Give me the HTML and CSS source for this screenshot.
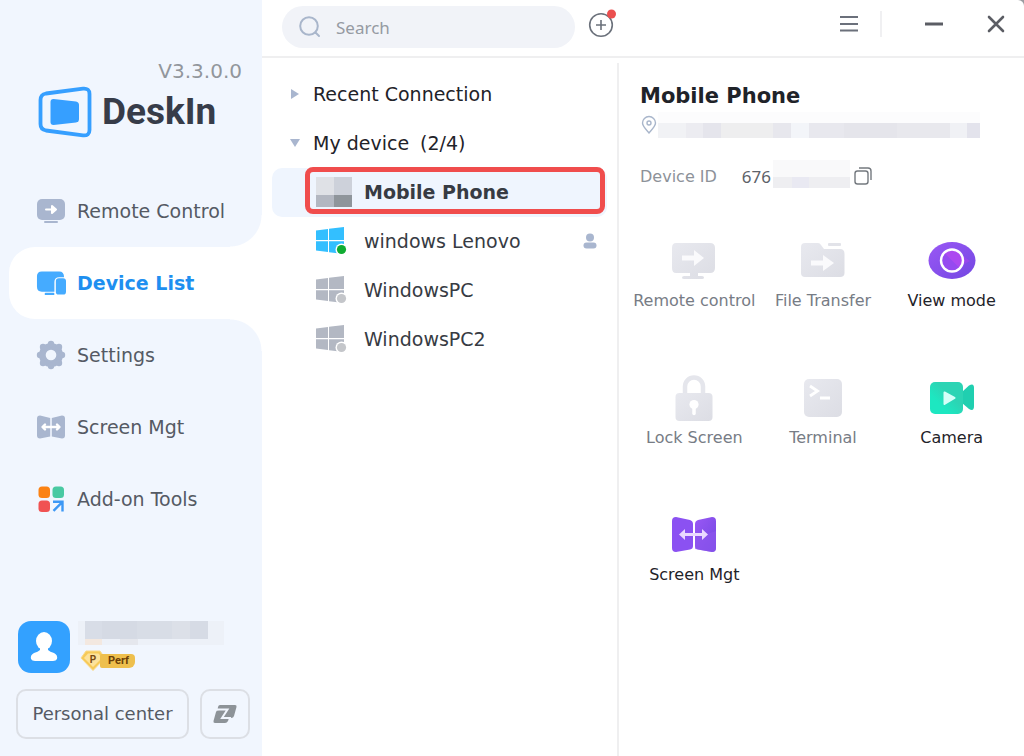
FILE: index.html
```html
<!DOCTYPE html>
<html lang="en">
<head>
    <meta charset="UTF-8">
    <meta name="viewport" content="width=device-width, initial-scale=1.0">
    <title>DeskIn</title>
    <link rel="stylesheet" href="styles.css">
</head>
<body>
    <div id="app">

        <!-- Sidebar -->
        <aside class="sidebar">
            <div class="brand">
                <span class="version">V3.3.0.0</span>
                <div class="logo">
                    <svg width="54" height="52" viewBox="0 0 54 52">
                        <path d="M8 7.500L45 2.600Q51.500 2 51.500 8V44Q51.500 50 45 49.400L8 44.500Q2.500 43.500 2.500 38V14Q2.500 8.500 8 7.500Z" fill="none" stroke="#369fff" stroke-width="3.800"/>
                        <path d="M15.500 13L38 15.500Q41 16 41 19V33Q41 36 38 36.500L15.500 39Q12.500 39 12.500 36V16Q12.500 13 15.500 13Z" fill="#369fff"/>
                    </svg>
                    <span>DeskIn</span>
                </div>
            </div>

            <nav class="menu">
                <a href="#">
                    <svg width="30" height="28" viewBox="0 0 30 28">
                        <rect x="1" y="2" width="28" height="21" rx="5" fill="#a9b6cf"/>
                        <rect x="8" y="24" width="14" height="2" rx="1" fill="#a9b6cf"/>
                        <path d="M10 12.500H18M16 9L20 12.500L16 16Z" fill="#fff" stroke="#fff" stroke-width="2" stroke-linejoin="round" stroke-linecap="round"/>
                    </svg>
                    Remote Control
                </a>
                <a href="#" class="active">
                    <svg width="31" height="28" viewBox="0 0 31 28">
                        <path d="M6 2H24Q29 2 29 8H24Q19 8 19 13V23H6Q1 23 1 18V7Q1 2 6 2Z" fill="#45abff"/>
                        <rect x="20.500" y="9" width="10.500" height="17" rx="3" fill="#45abff"/>
                        <rect x="9" y="24" width="10" height="2.500" rx="1" fill="#45abff"/>
                    </svg>
                    Device List
                </a>
                <a href="#">
                    <svg width="30" height="30" viewBox="0 0 30 30">
                        <g fill="#a9b6cf">
                            <circle cx="15" cy="15" r="12"/>
                            <circle cx="15" cy="4" r="3.200"/>
                            <circle cx="15" cy="26" r="3.200"/>
                            <circle cx="4" cy="15" r="3.200"/>
                            <circle cx="26" cy="15" r="3.200"/>
                            <circle cx="7" cy="7" r="3.200"/>
                            <circle cx="23" cy="7" r="3.200"/>
                            <circle cx="7" cy="23" r="3.200"/>
                            <circle cx="23" cy="23" r="3.200"/>
                        </g>
                        <circle cx="15" cy="15" r="5.300" fill="#f1f6fe"/>
                    </svg>
                    Settings
                </a>
                <a href="#">
                    <svg width="30" height="26" viewBox="0 0 30 26">
                        <path d="M4 1.500L14.200 4V22.500L4 24.500Q1 24.500 1 21.500V4.500Q1 1.500 4 1.500ZM26 1.500L15.800 4V22.500L26 24.500Q29 24.500 29 21.500V4.500Q29 1.500 26 1.500Z" fill="#a9b6cf"/>
                        <path d="M7 13H23M9 10.500L6.500 13L9 15.500M21 10.500L23.500 13L21 15.500" fill="none" stroke="#fff" stroke-width="2.400" stroke-linecap="round" stroke-linejoin="round"/>
                    </svg>
                    Screen Mgt
                </a>
                <a href="#">
                    <svg width="30" height="28" viewBox="0 0 30 28">
                        <rect x="2.500" y="1.500" width="11.500" height="11.500" rx="3.500" fill="#fb8214"/>
                        <rect x="16.500" y="1.500" width="11.500" height="11.500" rx="3.500" fill="#49c9a2"/>
                        <rect x="2.500" y="15.500" width="11.500" height="11.500" rx="3.500" fill="#f05252"/>
                        <path d="M17 16.800H26.500V26.500M26 17.300L17.500 25.800" fill="none" stroke="#3c98f5" stroke-width="2.400"/>
                    </svg>
                    Add-on Tools
                </a>
            </nav>

            <div class="account">
                <div class="user">
                    <div class="avatar">
                        <svg width="30" height="32" viewBox="0 0 30 32">
                            <ellipse cx="15" cy="10" rx="8" ry="9" fill="#fff"/>
                            <path d="M11 15H19V19Q21 21 25 22Q29 24 28 28Q27 30 24 30H6Q3 30 2 28Q1 24 5 22Q9 21 11 19Z" fill="#fff"/>
                        </svg>
                    </div>
                    <div class="user-info">
                        <svg width="146" height="24" viewBox="0 0 146 24">
                            <rect width="146" height="24" fill="#edf1f8"/>
                            <rect x="7" width="17" height="18" fill="#d8dde7"/>
                            <rect x="24" width="35" height="18" fill="#d5dae4"/>
                            <rect x="59" width="35" height="18" fill="#d8dde6"/>
                            <rect x="94" width="18" height="18" fill="#dce0e8"/>
                            <rect x="112" width="18" height="18" fill="#d6dbe5"/>
                            <rect x="7" y="18" width="17" height="6" fill="#f3e8e0"/>
                            <rect x="42" y="18" width="18" height="6" fill="#e5e7ed"/>
                        </svg>
                        <div class="plan">
                            <svg width="26" height="22" viewBox="0 0 26 22">
                                <path d="M6 1H20L25 8L13 20.500L1 8Z" fill="#f6ca59" stroke="#fbd98a" stroke-width="1"/>
                                <path d="M8 3.500H18.500L22 8L13 17L4 8Z" fill="#fde29b"/>
                                <text x="13" y="13" text-anchor="middle" class="plan-letter">P</text>
                            </svg>
                            <span>Perf</span>
                        </div>
                    </div>
                </div>
                <div class="account-buttons">
                    <button class="personal">Personal center</button>
                    <button class="switch" aria-label="Switch">
                        <svg width="26" height="20" viewBox="0 0 26 20">
                            <path d="M8 1H23Q25 1 24.500 3L22 12Q21.500 14 19 14H17L16 17Q15 19 13 19H3Q1 19 1.500 17L4 8Q4.500 6 7 6H5.500L6 3Q6.500 1 8 1Z" fill="#8d9398"/>
                            <path d="M5 5.500H15.500L10 14H19" fill="none" stroke="#f1f6fe" stroke-width="2"/>
                        </svg>
                    </button>
                </div>
            </div>
        </aside>

        <div class="main">
            <!-- Top bar -->
            <header class="topbar">
                <label class="search">
                    <svg width="22" height="22" viewBox="0 0 22 22" fill="none" stroke="#a9b6cb" stroke-width="2" stroke-linecap="round">
                        <circle cx="10" cy="10" r="8.800"/>
                        <path d="M16.500 16.500L20 20"/>
                    </svg>
                    <input type="text" placeholder="Search" aria-label="Search">
                </label>
                <button class="add" aria-label="Add device">
                    <svg width="30" height="34" viewBox="0 0 30 34">
                        <circle cx="14" cy="18" r="11.300" fill="none" stroke="#6b717b" stroke-width="1.600"/>
                        <path d="M14 13V23M9 18H19" stroke="#6b717b" stroke-width="1.600"/>
                        <circle cx="24.500" cy="7" r="4.500" fill="#eb4f4f"/>
                    </svg>
                </button>
                <div class="window-buttons">
                    <button aria-label="Menu">
                        <svg width="20" height="20" viewBox="0 0 20 20"><path d="M1 3H19M1 10H19M1 16.500H19" stroke="#6b707b" stroke-width="1.800"/></svg>
                    </button>
                    <span class="divider"></span>
                    <button aria-label="Minimize">
                        <svg width="20" height="20" viewBox="0 0 20 20"><path d="M1 10H19" stroke="#5b5d64" stroke-width="3"/></svg>
                    </button>
                    <button aria-label="Close">
                        <svg width="20" height="20" viewBox="0 0 20 20"><path d="M3 3L17 17M17 3L3 17" stroke="#5b5d64" stroke-width="2.600" stroke-linecap="round"/></svg>
                    </button>
                </div>
            </header>

            <div class="content">
                <!-- Device list -->
                <section class="devices">
                    <button class="group">
                        <svg width="12" height="12" viewBox="0 0 12 12"><path d="M2 1L10 6L2 11Z" fill="#a9b6cf"/></svg>
                        Recent Connection
                    </button>
                    <button class="group">
                        <svg width="12" height="12" viewBox="0 0 12 12"><path d="M1 2H11L6 10Z" fill="#a9b6cf"/></svg>
                        My device <span class="count">(2/4)</span>
                    </button>
                    <button class="device selected">
                        <svg width="36" height="30" viewBox="0 0 36 30">
                            <rect width="18" height="18" fill="#dfe1e6"/>
                            <rect x="18" width="18" height="18" fill="#cdd1da"/>
                            <rect y="18" width="18" height="12" fill="#b3b7c1"/>
                            <rect x="18" y="18" width="18" height="12" fill="#8f959b"/>
                        </svg>
                        Mobile Phone
                    </button>
                    <button class="device">
                        <svg width="36" height="30" viewBox="0 0 36 30">
                            <path d="M0 4.500L12 3V14H0ZM13 2.800L28 1V14H13ZM0 15.200H12V26L0 24.500ZM13 15.200H28V28L13 26.200Z" fill="#33bfff"/>
                            <circle cx="25.500" cy="23.500" r="6" fill="#fff"/>
                            <circle cx="25.500" cy="23.500" r="4.600" fill="#10ac32"/>
                        </svg>
                        windows Lenovo
                        <svg class="owner" width="14" height="16" viewBox="0 0 14 16" fill="#a9b6cf">
                            <circle cx="7" cy="4.500" r="4"/>
                            <rect x="0.500" y="9.500" width="13" height="6" rx="3"/>
                        </svg>
                    </button>
                    <button class="device">
                        <svg width="36" height="30" viewBox="0 0 36 30">
                            <path d="M0 4.500L12 3V14H0ZM13 2.800L28 1V14H13ZM0 15.200H12V26L0 24.500ZM13 15.200H28V28L13 26.200Z" fill="#b3b8c3"/>
                            <circle cx="25.500" cy="23.500" r="6" fill="#fff"/>
                            <circle cx="25.500" cy="23.500" r="4.600" fill="#c4c6ca"/>
                        </svg>
                        WindowsPC
                    </button>
                    <button class="device">
                        <svg width="36" height="30" viewBox="0 0 36 30">
                            <path d="M0 4.500L12 3V14H0ZM13 2.800L28 1V14H13ZM0 15.200H12V26L0 24.500ZM13 15.200H28V28L13 26.200Z" fill="#b3b8c3"/>
                            <circle cx="25.500" cy="23.500" r="6" fill="#fff"/>
                            <circle cx="25.500" cy="23.500" r="4.600" fill="#c4c6ca"/>
                        </svg>
                        WindowsPC2
                    </button>
                </section>

                <!-- Selected device -->
                <section class="detail">
                    <div class="info">
                        <h1>Mobile Phone</h1>
                        <div class="location">
                            <svg width="18" height="20" viewBox="0 0 18 20" fill="none" stroke="#a9b6cb" stroke-width="1.400">
                                <path d="M9 18C6 14.500 2.500 11 2.500 8A6.500 6.500 0 0 1 15.500 8C15.500 11 12 14.500 9 18Z"/>
                                <circle cx="9" cy="8" r="2"/>
                            </svg>
                            <svg width="322" height="26" viewBox="0 0 322 26">
                                <rect width="322" height="11" fill="#fcfcfd"/>
                                <rect y="11" width="322" height="15" fill="#ececf1"/>
                                <rect y="11" width="28" height="15" fill="#f1f2f5"/>
                                <rect x="45" y="11" width="18" height="15" fill="#e5e5ec"/>
                                <rect x="63" y="11" width="52" height="15" fill="#eeeeef"/>
                                <rect x="115" y="11" width="18" height="15" fill="#e7e7ed"/>
                                <rect x="133" y="11" width="18" height="15" fill="#f3f5f9"/>
                                <rect x="151" y="11" width="35" height="15" fill="#e8e8ee"/>
                                <rect x="186" y="11" width="53" height="15" fill="#e5e5eb"/>
                                <rect x="239" y="11" width="53" height="15" fill="#e8e8ed"/>
                                <rect x="292" y="11" width="17" height="15" fill="#f0f1f5"/>
                                <rect x="309" y="11" width="13" height="15" fill="#e3e3ec"/>
                            </svg>
                        </div>
                        <div class="device-id">
                            <span class="label">Device ID</span>
                            <span class="number">676</span>
                            <svg width="77" height="28" viewBox="0 0 77 28">
                                <rect width="77" height="17" fill="#f9f9fa"/>
                                <rect y="17" width="77" height="11" fill="#eeeef1"/>
                                <rect x="19" y="17" width="17" height="11" fill="#e9e9f2"/>
                            </svg>
                            <button aria-label="Copy device ID">
                                <svg width="20" height="20" viewBox="0 0 20 20" fill="none" stroke="#74797f" stroke-width="1.400">
                                    <rect x="2" y="5" width="13" height="13" rx="2.500"/>
                                    <path d="M6 2H15Q18 2 18 5V14"/>
                                </svg>
                            </button>
                        </div>
                    </div>

                    <svg width="0" height="0" class="defs">
                        <defs>
                            <linearGradient id="gray" x1="0" y1="0" x2="1" y2="1"><stop offset="0" stop-color="#e8e9ef"/><stop offset="1" stop-color="#dcdde4"/></linearGradient>
                            <linearGradient id="purple" x1="0" y1="0" x2="1" y2="1"><stop offset="0" stop-color="#9a58f5"/><stop offset="1" stop-color="#7347e2"/></linearGradient>
                            <linearGradient id="green" x1="0" y1="1" x2="1" y2="0"><stop offset="0.300" stop-color="#1de7c1"/><stop offset="0.600" stop-color="#2cd4b4"/></linearGradient>
                        </defs>
                    </svg>

                    <div class="actions">
                        <button disabled>
                            <svg width="48" height="48" viewBox="0 0 48 48">
                                <path d="M6 6H40Q45 6 45 11V31Q45 36 40 36H28V39H32Q34 39 34 40.500T32 42H14Q12 42 12 40.500T14 39H20V36H6Q2 36 2 31V11Q2 6 6 6Z" fill="url(#gray)"/>
                                <path d="M12 18.500H24V13L34 21L24 29V23.500H12Z" fill="#fafafc"/>
                            </svg>
                            Remote control
                        </button>
                        <button disabled>
                            <svg width="48" height="48" viewBox="0 0 48 48">
                                <path d="M6 6H19Q21 6 22 8L25 12H41Q45.500 12 45.500 17V36Q45.500 40 41 40H6Q2 40 2 36V10Q2 6 6 6Z" fill="url(#gray)"/>
                                <rect x="29" y="6" width="13" height="3" rx="1" fill="#e2e3e9"/>
                                <path d="M12 23.500H24V18L35 26L24 34V28.500H12Z" fill="#fafafc"/>
                            </svg>
                            File Transfer
                        </button>
                        <button>
                            <svg width="48" height="48" viewBox="0 0 48 48">
                                <ellipse cx="24" cy="23.500" rx="23.500" ry="18.500" fill="url(#purple)"/>
                                <path d="M31 16L42 24L31 30Z" fill="#a146ee" opacity=".7"/>
                                <circle cx="24" cy="23.500" r="11" fill="#ac4af0"/>
                                <path d="M16.200 15.700A11 11 0 0 0 31.800 31.300Z" fill="#964af0"/>
                                <circle cx="24" cy="23.500" r="11" fill="none" stroke="#fff" stroke-width="2.400"/>
                            </svg>
                            View mode
                        </button>
                        <button disabled>
                            <svg width="48" height="48" viewBox="0 0 48 48">
                                <path d="M15 21V12.500A9 9 0 0 1 33 12.500V21" fill="none" stroke="#e5e6ec" stroke-width="4.500"/>
                                <rect x="5.500" y="19" width="37" height="28" rx="4" fill="url(#gray)"/>
                                <circle cx="24" cy="30.500" r="4.600" fill="#fff"/>
                                <path d="M24 32V39.500" stroke="#fff" stroke-width="3.500" stroke-linecap="round"/>
                            </svg>
                            Lock Screen
                        </button>
                        <button disabled>
                            <svg width="48" height="48" viewBox="0 0 48 48">
                                <rect x="5" y="5" width="38" height="38" rx="5" fill="url(#gray)"/>
                                <path d="M11 12L18.500 17L11 22M21 24H31" fill="none" stroke="#fff" stroke-width="2.800"/>
                            </svg>
                            Terminal
                        </button>
                        <button>
                            <svg width="48" height="48" viewBox="0 0 48 48">
                                <path d="M34 18L41 11.500Q46 8.500 46 14V32Q46 38 41 35L34 29Z" fill="#20cfb0"/>
                                <rect x="2" y="8" width="33" height="32" rx="5" fill="url(#green)"/>
                                <path d="M16.500 18.500L26.500 24L16.500 30Z" fill="#d5fff8" stroke="#d5fff8" stroke-width="2" stroke-linejoin="round"/>
                            </svg>
                            Camera
                        </button>
                        <button>
                            <svg width="48" height="48" viewBox="0 0 48 48">
                                <path d="M6 6L20 9Q23 10 23 13V35Q23 38 20 38.500L6 41Q2 41 2 37V10Q2 6 6 6Z" fill="#8b51f2"/>
                                <path d="M42 6L28 9Q25 10 25 13V35Q25 38 28 38.500L42 41Q46 41 46 37V10Q46 6 42 6Z" fill="url(#purple)"/>
                                <path d="M25 27L46 20V37Q46 41 42 41L25 38Z" fill="#8f56ee" opacity=".6"/>
                                <path d="M9 23.500L15 18V22H32V18L38 23.500L32 29V25H15V29Z" fill="#ead9ff"/>
                            </svg>
                            Screen Mgt
                        </button>
                    </div>
                </section>
            </div>
        </div>
    </div>
</body>
</html>
```
FILE: styles.css
```css
* {
    box-sizing: border-box;
    margin: 0;
    padding: 0;
}

body {
    font-family: "DejaVu Sans", Verdana, sans-serif;
    font-size: 19px;
    line-height: 24px;
    color: #1f2329;
    background-color: #9a9ca1;
}

button {
    font: inherit;
    color: inherit;
    background: none;
    border: none;
    cursor: pointer;
}

a {
    color: inherit;
    text-decoration: none;
}

svg {
    display: block;
    flex-shrink: 0;
}

#app {
    display: flex;
    min-height: 100vh;
    background-color: #fff;
    border-top-right-radius: 6px;
}

/* Sidebar */
.sidebar {
    display: flex;
    flex-direction: column;
    width: 262px;
    flex-shrink: 0;
    background-color: #f1f6fe;
    color: #555a64;
}

.brand {
    display: flex;
    flex-direction: column;
    padding: 59px 20px 0 38px;
}

.version {
    align-self: flex-end;
    font-size: 20px;
    color: #92969c;
}

.logo {
    display: flex;
    align-items: center;
    gap: 10px;
    margin-top: 3px;
    font-family: Roboto, sans-serif;
    font-size: 37px;
    font-weight: bold;
    color: #373c49;
}

.menu {
    margin-top: 37px;
}

.menu a {
    position: relative;
    display: flex;
    align-items: center;
    gap: 11px;
    height: 72px;
    padding-left: 36px;
}

.menu svg {
    width: 30px;
}

.menu .active {
    margin-left: 9px;
    padding-left: 27px;
    border-radius: 26px 0 0 26px;
    background-color: #fff;
    color: #1e8ff0;
    font-weight: bold;
}

/* Curved corners above and below the active item */
.menu .active::before,
.menu .active::after {
    content: "";
    position: absolute;
    right: 0;
    width: 32px;
    height: 32px;
}

.menu .active::before {
    bottom: 100%;
    background: radial-gradient(circle at 0 0, #f1f6fe 31px, #fff 32px);
}

.menu .active::after {
    top: 100%;
    background: radial-gradient(circle at 0 100%, #f1f6fe 31px, #fff 32px);
}

.account {
    margin-top: auto;
    padding: 0 12px 17px 16px;
}

.user {
    display: flex;
    gap: 8px;
    padding-left: 2px;
}

.avatar {
    display: flex;
    align-items: center;
    justify-content: center;
    width: 52px;
    height: 52px;
    border-radius: 13px;
    background-color: #33a1ff;
}

.user-info {
    display: flex;
    flex-direction: column;
    gap: 5px;
}

.plan {
    display: flex;
    align-items: center;
    padding-left: 2px;
}

.plan span {
    margin-left: -6px;
    padding: 0 6px 0 8px;
    background-color: #eebf4d;
    border-radius: 2px 4px 6px 2px;
    font: bold 11px/14px Roboto, sans-serif;
    color: #6b3f08;
}

.plan-letter {
    font: bold 10px Roboto, sans-serif;
    fill: #7a4a10;
}

.account-buttons {
    display: flex;
    gap: 11px;
    margin-top: 16px;
}

.account-buttons button {
    display: flex;
    align-items: center;
    justify-content: center;
    height: 50px;
    border: 2px solid #dcdfe5;
    border-radius: 10px;
    font-size: 18px;
}

.personal {
    flex: 1;
}

.switch {
    width: 50px;
}

/* Top bar */
.main {
    display: flex;
    flex-direction: column;
    flex: 1;
}

.topbar {
    display: flex;
    align-items: center;
    height: 58px;
    padding: 0 18px 2px 20px;
    border-bottom: 2px solid #efeff0;
}

.search {
    display: flex;
    align-items: center;
    gap: 15px;
    width: 293px;
    height: 42px;
    padding: 0 17px;
    border-radius: 21px;
    background-color: #f1f3f8;
}

.search input {
    flex: 1;
    min-width: 0;
    border: none;
    outline: none;
    background: none;
    font: 17px "Noto Sans", sans-serif;
}

.search input::placeholder {
    color: #959aa2;
}

.add {
    margin: -6px 0 0 12px;
}

.window-buttons {
    display: flex;
    align-items: center;
    margin: -6px 0 0 auto;
}

.window-buttons button {
    margin-left: 42px;
}

.divider {
    width: 2px;
    height: 26px;
    margin-left: 21px;
    background-color: #f0f0f2;
}

.content {
    display: flex;
    flex: 1;
}

/* Device list */
.devices {
    width: 355px;
    padding: 12px 10px 0;
}

.group,
.device {
    position: relative;
    display: flex;
    align-items: center;
    width: 100%;
    height: 49px;
    text-align: left;
}

.group {
    gap: 12px;
    padding: 0 0 2px 17px;
}

.count {
    margin-left: -1px;
}

.device {
    gap: 12px;
    padding: 0 10px 1px 44px;
    color: #373b43;
}

.owner {
    margin-left: auto;
}

.selected {
    background-color: #eff5fe;
    border-radius: 10px;
    font-weight: bold;
}

/* Red frame around the selected device */
.selected::after {
    content: "";
    position: absolute;
    inset: -1px 2px 3px 33px;
    border: 5px solid #f04d4d;
    border-radius: 8px;
}

/* Device detail */
.detail {
    flex: 1;
    margin-top: 5px;
    border-left: 2px solid #efeff0;
}

.info {
    padding: 21px 20px 0 21px;
}

.detail h1 {
    font-size: 21px;
    line-height: 24px;
}

.location {
    display: flex;
    align-items: center;
    height: 26px;
    margin-top: 4px;
}

.device-id {
    display: flex;
    align-items: center;
    height: 28px;
    margin-top: 22px;
    font-size: 16px;
}

.device-id span {
    padding-top: 6px;
}

.device-id .label {
    color: #8d9299;
}

.device-id .number {
    margin: 0 2px 0 25px;
    padding-top: 4px;
    font: 17px "Noto Sans", sans-serif;
    color: #5d6269;
}

.device-id button {
    margin: 4px 0 0 3px;
}

.defs {
    position: absolute;
}

.actions {
    display: grid;
    grid-template-columns: repeat(3, 1fr);
    row-gap: 63px;
    margin-top: 49px;
    padding: 0 8px 0 11px;
}

.actions button {
    display: flex;
    flex-direction: column;
    align-items: center;
    gap: 6px;
    font-size: 16px;
    line-height: 20px;
    white-space: nowrap;
}

.actions button:disabled {
    color: #777c85;
    cursor: default;
}
```
